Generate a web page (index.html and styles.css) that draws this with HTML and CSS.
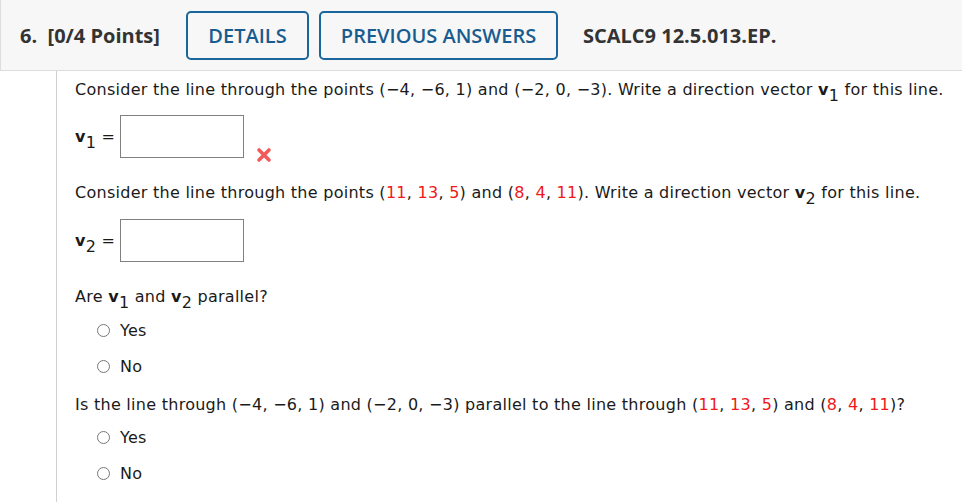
FILE: index.html
```html
<!DOCTYPE html>
<html>
<head>
<meta charset="utf-8">
<link rel="stylesheet" href="styles.css">
</head>
<body>
<div class="question">
  <div class="header">
    <span class="qnum">6.&nbsp; [0/4 Points]</span>
    <button class="btn btn-details">DETAILS</button>
    <button class="btn btn-prev">PREVIOUS ANSWERS</button>
    <span class="code">SCALC9 12.5.013.EP.</span>
  </div>
  <div class="body">
    <p class="line l1">Consider the line through the points (−4, −6, 1) and (−2, 0, −3). Write a direction vector <b>v</b><sub>1</sub> for this line.</p>
    <div class="ans a1">
      <span class="lbl"><b>v</b><sub>1</sub> =</span>
      <span class="box"></span>
      <svg class="wrong" width="16" height="16" viewBox="0 0 16 16"><path d="M3 3 L13 13 M13 3 L3 13" stroke="#f25a5a" stroke-width="3.6" stroke-linecap="round"/></svg>
    </div>
    <p class="line l2">Consider the line through the points (<span class="r">11</span>, <span class="r">13</span>, <span class="r">5</span>) and (<span class="r">8</span>, <span class="r">4</span>, <span class="r">11</span>). Write a direction vector <b>v</b><sub>2</sub> for this line.</p>
    <div class="ans a2">
      <span class="lbl"><b>v</b><sub>2</sub> =</span>
      <span class="box"></span>
    </div>
    <p class="line l3">Are <b>v</b><sub>1</sub> and <b>v</b><sub>2</sub> parallel?</p>
    <div class="opts o1">
      <label class="opt"><span class="radio"></span>Yes</label>
      <label class="opt"><span class="radio"></span>No</label>
    </div>
    <p class="line l4">Is the line through (−4, −6, 1) and (−2, 0, −3) parallel to the line through (<span class="r">11</span>, <span class="r">13</span>, <span class="r">5</span>) and (<span class="r">8</span>, <span class="r">4</span>, <span class="r">11</span>)?</p>
    <div class="opts o2">
      <label class="opt"><span class="radio"></span>Yes</label>
      <label class="opt"><span class="radio"></span>No</label>
    </div>
  </div>
</div>
</body>
</html>
```
FILE: styles.css
```css
html, body { margin: 0; padding: 0; background: #fff; }
.question { width: 962px; height: 502px; overflow: hidden; }
.header {
  height: 70px;
  background: #f7f7f7;
  border-left: 1px solid #ddd;
  border-bottom: 1px solid #dcdcdc;
  display: flex;
  align-items: center;
  font-family: "Open Sans", sans-serif;
  font-size: 20px;
  box-sizing: content-box;
}
.qnum { font-weight: 700; color: #333; margin-left: 19px; width: 166px; white-space: pre; }
.btn {
  font-family: "Open Sans", sans-serif;
  font-size: 20px;
  font-weight: 600;
  color: #195c8f;
  background: transparent;
  border: 2px solid #1a659b;
  border-radius: 5px;
  height: 49px;
  padding: 0;
  margin: 0;
}
.btn-details { width: 123px; }
.btn-prev { width: 239px; margin-left: 10px; }
.code { font-weight: 700; color: #333; margin-left: 25px; }
.body {
  margin-left: 56px;
  border-left: 1px solid #d0d0d0;
  padding-left: 18px;
  padding-top: 9px;
  height: 440px;
  font-family: "DejaVu Sans", Verdana, sans-serif;
  font-size: 16px;
  letter-spacing: 0.27px;
  color: #1a1a1a;
}
.line { margin: 0; line-height: 20px; }
sub { font-size: 16px; vertical-align: -6px; line-height: 0; }
b { font-weight: bold; }
.r { color: #f01818; }
.ans { display: flex; align-items: flex-start; margin-top: 15px; }
.lbl { padding-top: 12px; width: 45px; white-space: nowrap; }
.box { width: 122px; height: 41px; border: 1px solid #808080; background: #fff; }
.wrong { margin-left: 12px; margin-top: 32px; }
.l2 { margin-top: 20px; }
.a2 { margin-top: 16px; }
.l3 { margin-top: 25px; }
.opts { display: flex; flex-direction: column; padding-left: 22px; }
.o1 { margin-top: 5px; }
.o2 { margin-top: 4px; }
.opt { display: flex; align-items: center; height: 36px; }
.radio {
  width: 13px; height: 13px; border: 1px solid #777; border-radius: 50%;
  box-sizing: border-box; margin-right: 10px; background: #fff;
}
.l4 { margin-top: 11px; }
```
